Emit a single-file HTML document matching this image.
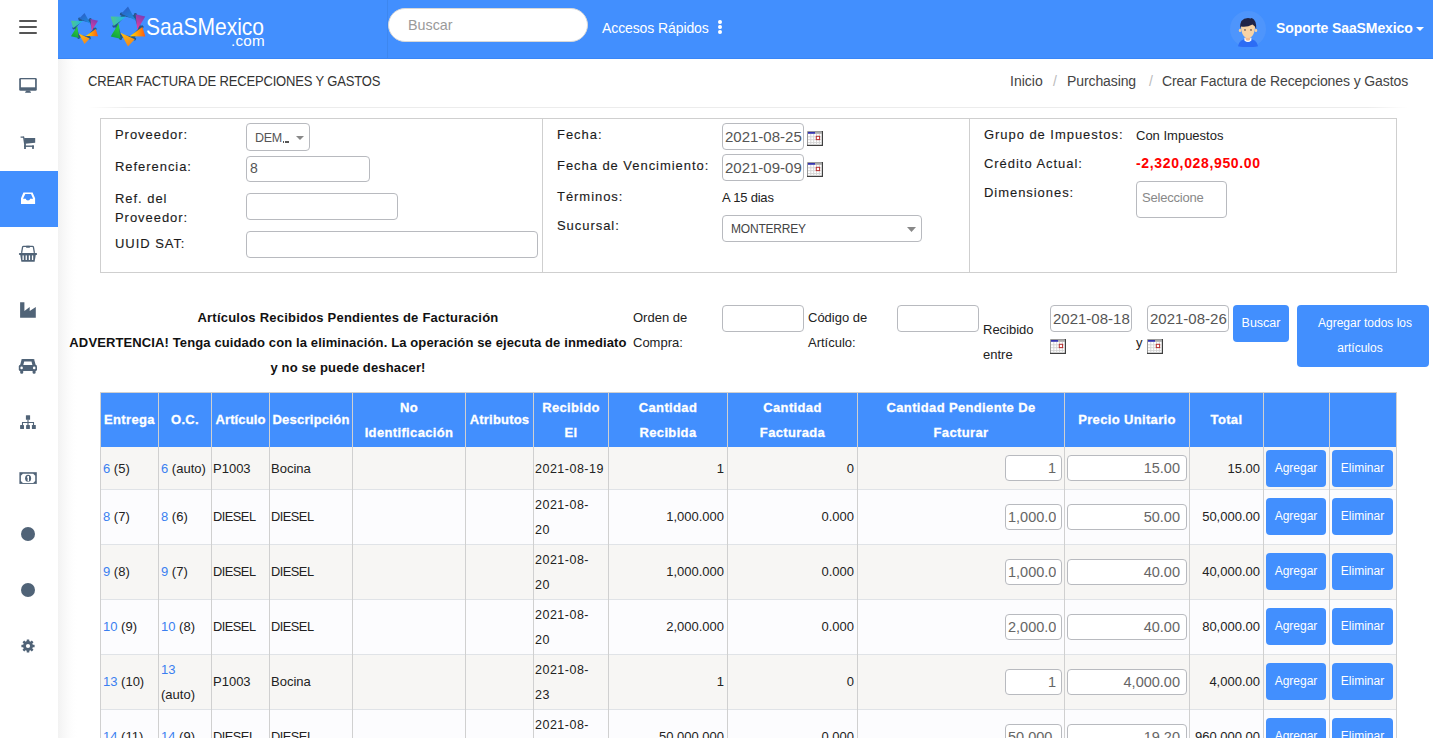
<!DOCTYPE html><html><head><meta charset="utf-8"><style>
*{box-sizing:border-box;margin:0;padding:0}
html,body{width:1433px;height:738px;overflow:hidden;background:#fff;font-family:"Liberation Sans",sans-serif;color:#222}
.a{position:absolute;white-space:nowrap}
svg{position:absolute;display:block}
#hdr{position:absolute;left:58px;top:0;width:1375px;height:59px;background:#428ffe;border-bottom:1px solid #3a86f6}
#content{position:absolute;left:58px;top:59px;width:1375px;height:679px;background:linear-gradient(90deg,#f2f2f2 0px,#f7f7f7 5px,#fbfbfb 10px,#fefefe 15px,#fff 19px)}
.lbl{position:absolute;white-space:nowrap;font-size:13px;letter-spacing:0.95px;color:#1b1b1b;-webkit-text-stroke:0.12px #1b1b1b;line-height:15px}
.inp{position:absolute;border:1px solid #b8babf;border-radius:4px;background:#fff;white-space:nowrap;overflow:hidden;color:#555}
.btn{position:absolute;background:#428ffe;border-radius:4px;color:#fff;font-size:12px;text-align:center;white-space:nowrap}
.txt{position:absolute;white-space:nowrap;font-size:13px;color:#222;line-height:15px}
</style></head><body>
<div id="content"></div>
<div id="hdr"></div>
<div class="a" style="left:19px;top:20px;width:18px;height:2px;background:#555;border-radius:1px"></div>
<div class="a" style="left:19px;top:26px;width:18px;height:2px;background:#555;border-radius:1px"></div>
<div class="a" style="left:19px;top:32px;width:18px;height:2px;background:#555;border-radius:1px"></div>
<div class="a" style="left:0;top:171px;width:58px;height:56px;background:#428ffe"></div>
<svg style="left:16px;top:73px" width="24" height="24" viewBox="0 0 24 24"><rect x="3.2" y="5" width="17.6" height="12.7" rx="1.3" fill="#506377"/><rect x="4.9" y="6.3" width="14.2" height="8" fill="#fff"/><rect x="10.1" y="17.5" width="3.8" height="1.6" fill="#506377"/><rect x="9.1" y="18.5" width="5.9" height="1.3" rx=".5" fill="#506377"/></svg>
<svg style="left:16px;top:130px" width="24" height="24" viewBox="0 0 24 24"><rect x="4.5" y="6.4" width="3.3" height="1.3" rx=".4" fill="#506377"/><path d="M6.9 6.4H8.1L9.9 13.6V18.9H8.1V14.2z" fill="#506377"/><path d="M8.1 7.9H19.2V12.8L9.3 13.7z" fill="#506377"/><rect x="8.1" y="15.5" width="9.8" height="1.4" fill="#506377"/><rect x="16.1" y="15.5" width="1.8" height="3.4" fill="#506377"/></svg>
<svg style="left:16px;top:186px" width="24" height="24" viewBox="0 0 24 24"><path d="M7.4 6.4H16.6L19.1 12.2V17.9H5V12.2zM9.3 8.1 7 12.8H9.8Q9.9 14.6 12 14.6Q14.1 14.6 14.1 12.8H17.1L15 8.1z" fill="#fff" fill-rule="evenodd"/></svg>
<svg style="left:16px;top:242px" width="24" height="24" viewBox="0 0 24 24"><path d="M5.6 10.9 6.6 5Q6.8 4.4 7.6 4.4H16.4Q17.2 4.4 17.4 5L18.4 10.9" stroke="#506377" stroke-width="1.3" fill="none"/><rect x="10" y="3.7" width="4" height="2" rx=".6" fill="#506377"/><rect x="2.9" y="11.1" width="18.2" height="1.9" rx=".9" fill="#506377"/><path d="M4.2 12.8H19.8L18.6 19.8H5.4z" fill="#506377"/><rect x="6.5" y="13.4" width="1.3" height="4.6" fill="#fff"/><rect x="9.6" y="13.4" width="1.3" height="4.6" fill="#fff"/><rect x="12.8" y="13.4" width="1.3" height="4.6" fill="#fff"/><rect x="15.9" y="13.4" width="1.3" height="4.6" fill="#fff"/></svg>
<svg style="left:16px;top:298px" width="24" height="24" viewBox="0 0 24 24"><path d="M4.1 4.2H8.4V12.9L13.7 9.1V12.9L19.8 9.1V19.8H4.1z" fill="#506377"/></svg>
<svg style="left:16px;top:352px" width="24" height="24" viewBox="0 0 24 24"><rect x="2.8" y="12.8" width="18.2" height="6.2" rx="1.6" fill="#506377"/><path d="M6.4 7H17.4Q18 7 18.2 7.6L19.7 13.3H4.1L5.6 7.6Q5.8 7 6.4 7z" fill="#506377"/><path d="M8.2 9.4H15.5L16.4 12.9H7.3z" fill="#fff"/><rect x="4.2" y="17" width="3" height="4.8" rx="1.3" fill="#506377"/><rect x="16.6" y="17" width="3" height="4.8" rx="1.3" fill="#506377"/><circle cx="5.6" cy="15.9" r="1.3" fill="#fff"/><circle cx="18.2" cy="15.9" r="1.3" fill="#fff"/></svg>
<svg style="left:16px;top:410px" width="24" height="24" viewBox="0 0 24 24"><rect x="9.9" y="5.2" width="4.2" height="4.6" rx=".5" fill="#506377"/><rect x="4.1" y="15" width="3.9" height="3.9" rx=".5" fill="#506377"/><rect x="10.1" y="15" width="3.8" height="3.9" rx=".5" fill="#506377"/><rect x="15.9" y="15" width="3.9" height="3.9" rx=".5" fill="#506377"/><path d="M12 9.5V15.2M6.5 15.2V12.45H17.5V15.2" stroke="#506377" stroke-width="1.1" fill="none"/></svg>
<svg style="left:16px;top:466px" width="24" height="24" viewBox="0 0 24 24"><rect x="3.4" y="6.2" width="17.4" height="11.7" fill="#506377"/><polygon points="6.9,7.8 17.2,7.8 19.2,9.8 19.2,14.9 17.2,16.9 6.9,16.9 4.9,14.9 4.9,9.8" fill="#fff"/><ellipse cx="12.1" cy="12.35" rx="3" ry="3.5" fill="#506377"/><path d="M11 10.6 12.2 9.9H13V15.2H11.6V11.6L11 11.9z" fill="#fff"/></svg>
<svg style="left:21px;top:527px" width="14" height="14" viewBox="0 0 14 14"><circle cx="7" cy="7" r="7" fill="#506377"/></svg>
<svg style="left:21px;top:583px" width="14" height="14" viewBox="0 0 14 14"><circle cx="7" cy="7" r="7" fill="#506377"/></svg>
<svg style="left:16px;top:634px" width="24" height="24" viewBox="0 0 24 24"><circle cx="12" cy="12" r="4.9" fill="#506377"/><rect x="10.7" y="5.4" width="2.6" height="4" rx=".4" fill="#506377" transform="rotate(0 12 12)"/><rect x="10.7" y="5.4" width="2.6" height="4" rx=".4" fill="#506377" transform="rotate(45 12 12)"/><rect x="10.7" y="5.4" width="2.6" height="4" rx=".4" fill="#506377" transform="rotate(90 12 12)"/><rect x="10.7" y="5.4" width="2.6" height="4" rx=".4" fill="#506377" transform="rotate(135 12 12)"/><rect x="10.7" y="5.4" width="2.6" height="4" rx=".4" fill="#506377" transform="rotate(180 12 12)"/><rect x="10.7" y="5.4" width="2.6" height="4" rx=".4" fill="#506377" transform="rotate(225 12 12)"/><rect x="10.7" y="5.4" width="2.6" height="4" rx=".4" fill="#506377" transform="rotate(270 12 12)"/><rect x="10.7" y="5.4" width="2.6" height="4" rx=".4" fill="#506377" transform="rotate(315 12 12)"/><circle cx="12" cy="12" r="2.1" fill="#fff"/></svg>
<svg style="left:60px;top:6px" width="48" height="46" viewBox="0 0 48 46"><polygon points="19.37,12.86 30.52,15.33 30.29,13.24 33.72,24.13 35.41,22.88 27.70,31.30 29.63,32.14 18.48,29.67 18.71,31.76 15.28,20.87 13.59,22.12 21.30,13.70" fill="none" stroke="#1d4f7a" stroke-width="2.50" stroke-linejoin="round" opacity="0.85"/><linearGradient id="ga0" x1="30.4" y1="17.6" x2="24.5" y2="6.9" gradientUnits="userSpaceOnUse"><stop offset="0" stop-color="#1a8ee0"/><stop offset="1" stop-color="#2a62c8"/></linearGradient><polygon points="19.23,12.58 24.50,6.90 30.36,17.59" fill="url(#ga0)"/><linearGradient id="ga60" x1="31.7" y1="25.1" x2="38.0" y2="14.7" gradientUnits="userSpaceOnUse"><stop offset="0" stop-color="#f03c9c"/><stop offset="1" stop-color="#7a3cb4"/></linearGradient><polygon points="30.45,12.97 38.01,14.70 31.68,25.11" fill="url(#ga60)"/><linearGradient id="ga120" x1="25.8" y1="30.0" x2="38.0" y2="30.3" gradientUnits="userSpaceOnUse"><stop offset="0" stop-color="#ffe000"/><stop offset="1" stop-color="#ff5a10"/></linearGradient><polygon points="35.73,22.89 38.01,30.30 25.83,30.03" fill="url(#ga120)"/><linearGradient id="ga180" x1="18.6" y1="27.4" x2="24.5" y2="38.1" gradientUnits="userSpaceOnUse"><stop offset="0" stop-color="#ffc010"/><stop offset="1" stop-color="#f08a20"/></linearGradient><polygon points="29.77,32.42 24.50,38.10 18.64,27.41" fill="url(#ga180)"/><linearGradient id="ga240" x1="17.3" y1="19.9" x2="11.0" y2="30.3" gradientUnits="userSpaceOnUse"><stop offset="0" stop-color="#34d838"/><stop offset="1" stop-color="#10a040"/></linearGradient><polygon points="18.55,32.03 10.99,30.30 17.32,19.89" fill="url(#ga240)"/><linearGradient id="ga300" x1="23.2" y1="15.0" x2="11.0" y2="14.7" gradientUnits="userSpaceOnUse"><stop offset="0" stop-color="#1ab4f4"/><stop offset="1" stop-color="#50c888"/></linearGradient><polygon points="13.27,22.11 10.99,14.70 23.17,14.97" fill="url(#ga300)"/></svg>
<svg style="left:100px;top:0px" width="56" height="54" viewBox="0 0 56 54"><polygon points="21.43,14.14 35.71,17.31 35.42,14.63 39.82,28.58 41.99,26.99 32.10,37.78 34.57,38.86 20.29,35.69 20.58,38.37 16.18,24.42 14.01,26.01 23.90,15.22" fill="none" stroke="#1d4f7a" stroke-width="3.20" stroke-linejoin="round" opacity="0.85"/><linearGradient id="gb0" x1="35.5" y1="20.2" x2="28.0" y2="6.5" gradientUnits="userSpaceOnUse"><stop offset="0" stop-color="#1a8ee0"/><stop offset="1" stop-color="#2a62c8"/></linearGradient><polygon points="21.24,13.79 28.00,6.50 35.51,20.20" fill="url(#gb0)"/><linearGradient id="gb60" x1="37.2" y1="29.9" x2="45.3" y2="16.5" gradientUnits="userSpaceOnUse"><stop offset="0" stop-color="#f03c9c"/><stop offset="1" stop-color="#7a3cb4"/></linearGradient><polygon points="35.63,14.29 45.32,16.50 37.21,29.85" fill="url(#gb60)"/><linearGradient id="gb120" x1="29.7" y1="36.2" x2="45.3" y2="36.5" gradientUnits="userSpaceOnUse"><stop offset="0" stop-color="#ffe000"/><stop offset="1" stop-color="#ff5a10"/></linearGradient><polygon points="42.39,27.00 45.32,36.50 29.70,36.15" fill="url(#gb120)"/><linearGradient id="gb180" x1="20.5" y1="32.8" x2="28.0" y2="46.5" gradientUnits="userSpaceOnUse"><stop offset="0" stop-color="#ffc010"/><stop offset="1" stop-color="#f08a20"/></linearGradient><polygon points="34.76,39.21 28.00,46.50 20.49,32.80" fill="url(#gb180)"/><linearGradient id="gb240" x1="18.8" y1="23.1" x2="10.7" y2="36.5" gradientUnits="userSpaceOnUse"><stop offset="0" stop-color="#34d838"/><stop offset="1" stop-color="#10a040"/></linearGradient><polygon points="20.37,38.71 10.68,36.50 18.79,23.15" fill="url(#gb240)"/><linearGradient id="gb300" x1="26.3" y1="16.8" x2="10.7" y2="16.5" gradientUnits="userSpaceOnUse"><stop offset="0" stop-color="#1ab4f4"/><stop offset="1" stop-color="#50c888"/></linearGradient><polygon points="13.61,26.00 10.68,16.50 26.30,16.85" fill="url(#gb300)"/></svg>
<div class="a" style="left:146px;top:13px;font-size:24px;line-height:28px;color:#fff;transform:scaleX(0.876);transform-origin:0 0">SaaSMexico</div>
<div class="a" style="left:231px;top:32.5px;font-size:14.5px;line-height:16px;color:#fff;letter-spacing:0.2px;transform:scaleX(1.05);transform-origin:0 0">.com</div>
<div class="a" style="left:387px;top:0;width:1px;height:58px;background:#3d87ef"></div>
<div class="a" style="left:388px;top:8px;width:200px;height:34px;border-radius:17px;background:#fff;border:1px solid #d8d8d8"></div>
<div class="a" style="left:408px;top:17px;font-size:14.3px;line-height:16px;color:#9a9a9a">Buscar</div>
<div class="a" style="left:602px;top:20px;font-size:14px;line-height:16px;color:#fff;letter-spacing:-0.1px">Accesos Rápidos</div>
<div class="a" style="left:718.1px;top:19.9px;width:3.8px;height:3.8px;border-radius:50%;background:#fff"></div>
<div class="a" style="left:718.1px;top:25px;width:3.8px;height:3.8px;border-radius:50%;background:#fff"></div>
<div class="a" style="left:718.1px;top:30.1px;width:3.8px;height:3.8px;border-radius:50%;background:#fff"></div>
<svg style="left:1230px;top:11px" width="36" height="36" viewBox="0 0 36 36"><circle cx="18" cy="18" r="18" fill="#4e95fc"/><path d="M8 35.3Q9 28.2 18 27.8Q27 28.2 28 35.3Q18 37.2 8 35.3z" fill="#2c6cf5"/><path d="M14.4 26.8H21.4V29.6Q18 32.6 14.4 29.6z" fill="#fff"/><rect x="15.4" y="25" width="5" height="4.8" rx="2.2" fill="#f2bb90"/><ellipse cx="10" cy="19.4" rx="1.2" ry="1.7" fill="#f5cfa0"/><ellipse cx="26" cy="19.4" rx="1.2" ry="1.7" fill="#f5cfa0"/><path d="M10.9 12Q10.7 26.9 18 26.9Q25.3 26.9 25.2 12z" fill="#f7d3a5"/><path d="M10 18Q9.4 7 18 7Q19.6 7 20.6 7.5L21.8 7Q26.7 9.2 26.2 18Q25 14.6 22.4 13.4Q17.2 16.6 11.2 15.6Q10.4 16.6 10 18z" fill="#1f2448"/><circle cx="15" cy="18.9" r=".85" fill="#6a5a58"/><circle cx="21" cy="18.9" r=".85" fill="#6a5a58"/></svg>
<div class="a" style="left:1276px;top:20px;font-size:14px;line-height:16px;color:#fff;font-weight:bold;letter-spacing:-0.1px">Soporte SaaSMexico</div>
<svg style="left:1416px;top:27px" width="8" height="4" viewBox="0 0 8 4"><path d="M0 0h8L4 4z" fill="#fff"/></svg>
<div class="a" style="left:88px;top:73px;font-size:14.6px;line-height:16px;color:#333;letter-spacing:-0.2px;transform:scaleX(0.892);transform-origin:0 0">CREAR FACTURA DE RECEPCIONES Y GASTOS</div>
<div class="a" style="left:1010px;top:73px;font-size:14px;line-height:16px;color:#444">Inicio</div>
<div class="a" style="left:1053px;top:73px;font-size:14px;line-height:16px;color:#bbb">/</div>
<div class="a" style="left:1067px;top:73px;font-size:14px;line-height:16px;color:#444;letter-spacing:-0.1px">Purchasing</div>
<div class="a" style="left:1149px;top:73px;font-size:14px;line-height:16px;color:#bbb">/</div>
<div class="a" style="left:1162px;top:73px;font-size:14px;line-height:16px;color:#444;letter-spacing:-0.1px">Crear Factura de Recepciones y Gastos</div>
<div class="a" style="left:88px;top:107px;width:1320px;height:1px;background:linear-gradient(90deg,rgba(230,230,230,0),#ececec 40px,#ececec 1280px,rgba(230,230,230,0))"></div>
<div class="a" style="left:100px;top:118px;width:1297px;height:155px;border:1px solid #cfcfcf;background:#fff"></div>
<div class="a" style="left:542px;top:118px;width:1px;height:155px;background:#cfcfcf"></div>
<div class="a" style="left:969px;top:118px;width:1px;height:155px;background:#cfcfcf"></div>
<div class="lbl" style="left:115px;top:127px">Proveedor:</div>
<div class="inp" style="left:246px;top:123px;width:64px;height:28px;"><span style="position:absolute;left:8px;top:7px;font-size:12.5px;color:#555;letter-spacing:-0.3px">DEM</span><span style="position:absolute;left:36px;top:17px;width:6px;height:1.6px;background:repeating-linear-gradient(90deg,#555 0,#555 1.4px,transparent 1.4px,transparent 2.2px)"></span><svg style="left:49px;top:12px" width="8" height="4"><path d="M0 0h8L4 4z" fill="#888"/></svg></div>
<div class="lbl" style="left:115px;top:159px">Referencia:</div>
<div class="inp" style="left:246px;top:156px;width:124px;height:26px;"><span style="position:absolute;left:3px;top:3px;font-size:14px;color:#555">8</span></div>
<div class="lbl" style="left:115px;top:191px">Ref. del</div>
<div class="lbl" style="left:115px;top:210px">Proveedor:</div>
<div class="inp" style="left:246px;top:193px;width:152px;height:27px;"></div>
<div class="lbl" style="left:115px;top:236px">UUID SAT:</div>
<div class="inp" style="left:246px;top:231px;width:292px;height:27px;"></div>
<div class="lbl" style="left:557px;top:127px">Fecha:</div>
<div class="inp" style="left:722px;top:123px;width:82px;height:27px;"><span style="position:absolute;left:2px;top:4px;font-size:15px;color:#555">2021-08-25</span></div>
<svg style="left:807px;top:131px" width="16" height="15" viewBox="0 0 16 15"><rect x="0" y="0" width="16" height="15" fill="#fff"/><path d="M.5 15V.5H15" stroke="#9a9a9a" stroke-width="1" fill="none"/><path d="M15.4 0v14.4H0" stroke="#404040" stroke-width="1.2" fill="none"/><rect x="1" y="1" width="7" height="1.8" fill="#3434b0"/><rect x="8" y="1" width="7" height="1.8" fill="#a8a8a8"/><path d="M3.8 3v11M6.7 3v11M9.5 3v11M12.4 3v11M1 5.8h14M1 8.7h14M1 11.6h14" stroke="#d2d2d2" stroke-width=".9"/><rect x="9.3" y="5.3" width="3.3" height="3.3" fill="#fff" stroke="#b83030" stroke-width="1"/></svg>
<div class="lbl" style="left:557px;top:158px">Fecha de Vencimiento:</div>
<div class="inp" style="left:722px;top:154px;width:82px;height:27px;"><span style="position:absolute;left:2px;top:4px;font-size:15px;color:#555">2021-09-09</span></div>
<svg style="left:807px;top:162px" width="16" height="15" viewBox="0 0 16 15"><rect x="0" y="0" width="16" height="15" fill="#fff"/><path d="M.5 15V.5H15" stroke="#9a9a9a" stroke-width="1" fill="none"/><path d="M15.4 0v14.4H0" stroke="#404040" stroke-width="1.2" fill="none"/><rect x="1" y="1" width="7" height="1.8" fill="#3434b0"/><rect x="8" y="1" width="7" height="1.8" fill="#a8a8a8"/><path d="M3.8 3v11M6.7 3v11M9.5 3v11M12.4 3v11M1 5.8h14M1 8.7h14M1 11.6h14" stroke="#d2d2d2" stroke-width=".9"/><rect x="9.3" y="5.3" width="3.3" height="3.3" fill="#fff" stroke="#b83030" stroke-width="1"/></svg>
<div class="lbl" style="left:557px;top:189px">Términos:</div>
<div class="txt" style="left:722px;top:190px;letter-spacing:-0.2px">A 15 dias</div>
<div class="lbl" style="left:557px;top:218px">Sucursal:</div>
<div class="inp" style="left:722px;top:215px;width:200px;height:27px;"><span style="position:absolute;left:8px;top:6px;font-size:12px;color:#444;letter-spacing:-0.2px">MONTERREY</span><svg style="left:184px;top:11px" width="9" height="5"><path d="M0 0h9L4.5 5z" fill="#888"/></svg></div>
<div class="lbl" style="left:984px;top:127px">Grupo de Impuestos:</div>
<div class="txt" style="left:1136px;top:128px;">Con Impuestos</div>
<div class="lbl" style="left:984px;top:156px">Crédito Actual:</div>
<div class="a" style="left:1136px;top:156px;font-size:14px;line-height:15px;font-weight:bold;color:#f00;letter-spacing:0.65px">-2,320,028,950.00</div>
<div class="lbl" style="left:984px;top:185px">Dimensiones:</div>
<div class="inp" style="left:1136px;top:181px;width:91px;height:37px;"><span style="position:absolute;left:5px;top:8px;font-size:13px;color:#888;letter-spacing:-0.2px">Seleccione</span></div>
<div class="a" style="left:-52px;width:800px;text-align:center;top:310px;font-size:13px;line-height:15px;font-weight:bold;color:#111;letter-spacing:0.22px">Artículos Recibidos Pendientes de Facturación</div>
<div class="a" style="left:-52px;width:800px;text-align:center;top:335px;font-size:13px;line-height:15px;font-weight:bold;color:#111;letter-spacing:0.12px">ADVERTENCIA! Tenga cuidado con la eliminación. La operación se ejecuta de inmediato</div>
<div class="a" style="left:-52px;width:800px;text-align:center;top:360px;font-size:13px;line-height:15px;font-weight:bold;color:#111;letter-spacing:0.15px">y no se puede deshacer!</div>
<div class="txt" style="left:633px;top:310px;">Orden de</div>
<div class="txt" style="left:633px;top:335px;">Compra:</div>
<div class="inp" style="left:722px;top:305px;width:82px;height:27px;"></div>
<div class="txt" style="left:808px;top:310px;">Código de</div>
<div class="txt" style="left:808px;top:335px;">Artículo:</div>
<div class="inp" style="left:897px;top:305px;width:82px;height:27px;"></div>
<div class="txt" style="left:983px;top:322px;">Recibido</div>
<div class="txt" style="left:983px;top:347px;">entre</div>
<div class="inp" style="left:1050px;top:305px;width:82px;height:27px;"><span style="position:absolute;left:2px;top:4px;font-size:15px;color:#555">2021-08-18</span></div>
<svg style="left:1050px;top:339px" width="16" height="15" viewBox="0 0 16 15"><rect x="0" y="0" width="16" height="15" fill="#fff"/><path d="M.5 15V.5H15" stroke="#9a9a9a" stroke-width="1" fill="none"/><path d="M15.4 0v14.4H0" stroke="#404040" stroke-width="1.2" fill="none"/><rect x="1" y="1" width="7" height="1.8" fill="#3434b0"/><rect x="8" y="1" width="7" height="1.8" fill="#a8a8a8"/><path d="M3.8 3v11M6.7 3v11M9.5 3v11M12.4 3v11M1 5.8h14M1 8.7h14M1 11.6h14" stroke="#d2d2d2" stroke-width=".9"/><rect x="9.3" y="5.3" width="3.3" height="3.3" fill="#fff" stroke="#b83030" stroke-width="1"/></svg>
<div class="txt" style="left:1136px;top:335px;">y</div>
<div class="inp" style="left:1147px;top:305px;width:82px;height:27px;"><span style="position:absolute;left:2px;top:4px;font-size:15px;color:#555">2021-08-26</span></div>
<svg style="left:1147px;top:339px" width="16" height="15" viewBox="0 0 16 15"><rect x="0" y="0" width="16" height="15" fill="#fff"/><path d="M.5 15V.5H15" stroke="#9a9a9a" stroke-width="1" fill="none"/><path d="M15.4 0v14.4H0" stroke="#404040" stroke-width="1.2" fill="none"/><rect x="1" y="1" width="7" height="1.8" fill="#3434b0"/><rect x="8" y="1" width="7" height="1.8" fill="#a8a8a8"/><path d="M3.8 3v11M6.7 3v11M9.5 3v11M12.4 3v11M1 5.8h14M1 8.7h14M1 11.6h14" stroke="#d2d2d2" stroke-width=".9"/><rect x="9.3" y="5.3" width="3.3" height="3.3" fill="#fff" stroke="#b83030" stroke-width="1"/></svg>
<div class="btn" style="left:1233px;top:305px;width:56px;height:37px;line-height:36px;font-size:12.5px">Buscar</div>
<div class="btn" style="left:1297px;top:305px;width:132px;height:62px"></div>
<div class="a" style="left:1265px;width:200px;text-align:center;top:316px;font-size:12px;line-height:15px;color:#fff">Agregar todos los</div>
<div class="a" style="left:1260px;width:200px;text-align:center;top:341px;font-size:12px;line-height:15px;color:#fff">artículos</div>
<div class="a" style="left:100px;top:392px;width:1297px;height:55px;background:#428ffe"></div>
<div class="a" style="left:100px;top:447px;width:1297px;height:42px;background:#f7f6f4"></div>
<div class="a" style="left:100px;top:489px;width:1297px;height:55px;background:#fcfcfe"></div>
<div class="a" style="left:100px;top:544px;width:1297px;height:55px;background:#f7f6f4"></div>
<div class="a" style="left:100px;top:599px;width:1297px;height:55px;background:#fcfcfe"></div>
<div class="a" style="left:100px;top:654px;width:1297px;height:55px;background:#f7f6f4"></div>
<div class="a" style="left:100px;top:709px;width:1297px;height:55px;background:#fcfcfe"></div>
<div class="a" style="left:100px;top:489px;width:1297px;height:1px;background:#e0e3e7"></div>
<div class="a" style="left:100px;top:544px;width:1297px;height:1px;background:#e0e3e7"></div>
<div class="a" style="left:100px;top:599px;width:1297px;height:1px;background:#e0e3e7"></div>
<div class="a" style="left:100px;top:654px;width:1297px;height:1px;background:#e0e3e7"></div>
<div class="a" style="left:100px;top:709px;width:1297px;height:1px;background:#e0e3e7"></div>
<div class="a" style="left:100px;top:764px;width:1297px;height:1px;background:#e0e3e7"></div>
<div class="a" style="left:100px;top:392px;width:1297px;height:1px;background:#d0d0d0"></div>
<div class="a" style="left:100px;top:392px;width:1px;height:346px;background:#d0d0d0"></div>
<div class="a" style="left:158px;top:392px;width:1px;height:346px;background:#d0d0d0"></div>
<div class="a" style="left:211px;top:392px;width:1px;height:346px;background:#d0d0d0"></div>
<div class="a" style="left:269px;top:392px;width:1px;height:346px;background:#d0d0d0"></div>
<div class="a" style="left:352px;top:392px;width:1px;height:346px;background:#d0d0d0"></div>
<div class="a" style="left:465px;top:392px;width:1px;height:346px;background:#d0d0d0"></div>
<div class="a" style="left:533px;top:392px;width:1px;height:346px;background:#d0d0d0"></div>
<div class="a" style="left:608px;top:392px;width:1px;height:346px;background:#d0d0d0"></div>
<div class="a" style="left:727px;top:392px;width:1px;height:346px;background:#d0d0d0"></div>
<div class="a" style="left:857px;top:392px;width:1px;height:346px;background:#d0d0d0"></div>
<div class="a" style="left:1064px;top:392px;width:1px;height:346px;background:#d0d0d0"></div>
<div class="a" style="left:1189px;top:392px;width:1px;height:346px;background:#d0d0d0"></div>
<div class="a" style="left:1263px;top:392px;width:1px;height:346px;background:#d0d0d0"></div>
<div class="a" style="left:1329px;top:392px;width:1px;height:346px;background:#d0d0d0"></div>
<div class="a" style="left:1396px;top:392px;width:1px;height:346px;background:#d0d0d0"></div>
<div class="a" style="left:100px;width:59px;text-align:center;top:412.0px;font-size:13px;line-height:15px;font-weight:bold;color:#fff;letter-spacing:0.35px;-webkit-text-stroke:0.3px #fff">Entrega</div>
<div class="a" style="left:158px;width:54px;text-align:center;top:412.0px;font-size:13px;line-height:15px;font-weight:bold;color:#fff;letter-spacing:0.35px;-webkit-text-stroke:0.3px #fff">O.C.</div>
<div class="a" style="left:211px;width:59px;text-align:center;top:412.0px;font-size:13px;line-height:15px;font-weight:bold;color:#fff;letter-spacing:0.1px;-webkit-text-stroke:0.3px #fff">Artículo</div>
<div class="a" style="left:269px;width:84px;text-align:center;top:412.0px;font-size:13px;line-height:15px;font-weight:bold;color:#fff;letter-spacing:0.25px;-webkit-text-stroke:0.3px #fff">Descripción</div>
<div class="a" style="left:352px;width:114px;text-align:center;top:399.5px;font-size:13px;line-height:15px;font-weight:bold;color:#fff;letter-spacing:0.35px;-webkit-text-stroke:0.3px #fff">No</div>
<div class="a" style="left:352px;width:114px;text-align:center;top:424.5px;font-size:13px;line-height:15px;font-weight:bold;color:#fff;letter-spacing:0.35px;-webkit-text-stroke:0.3px #fff">Identificación</div>
<div class="a" style="left:465px;width:69px;text-align:center;top:412.0px;font-size:13px;line-height:15px;font-weight:bold;color:#fff;letter-spacing:0.2px;-webkit-text-stroke:0.3px #fff">Atributos</div>
<div class="a" style="left:533px;width:76px;text-align:center;top:399.5px;font-size:13px;line-height:15px;font-weight:bold;color:#fff;letter-spacing:0.35px;-webkit-text-stroke:0.3px #fff">Recibido</div>
<div class="a" style="left:533px;width:76px;text-align:center;top:424.5px;font-size:13px;line-height:15px;font-weight:bold;color:#fff;letter-spacing:0.35px;-webkit-text-stroke:0.3px #fff">El</div>
<div class="a" style="left:608px;width:120px;text-align:center;top:399.5px;font-size:13px;line-height:15px;font-weight:bold;color:#fff;letter-spacing:0.35px;-webkit-text-stroke:0.3px #fff">Cantidad</div>
<div class="a" style="left:608px;width:120px;text-align:center;top:424.5px;font-size:13px;line-height:15px;font-weight:bold;color:#fff;letter-spacing:0.35px;-webkit-text-stroke:0.3px #fff">Recibida</div>
<div class="a" style="left:727px;width:131px;text-align:center;top:399.5px;font-size:13px;line-height:15px;font-weight:bold;color:#fff;letter-spacing:0.35px;-webkit-text-stroke:0.3px #fff">Cantidad</div>
<div class="a" style="left:727px;width:131px;text-align:center;top:424.5px;font-size:13px;line-height:15px;font-weight:bold;color:#fff;letter-spacing:0.35px;-webkit-text-stroke:0.3px #fff">Facturada</div>
<div class="a" style="left:857px;width:208px;text-align:center;top:399.5px;font-size:13px;line-height:15px;font-weight:bold;color:#fff;letter-spacing:0.35px;-webkit-text-stroke:0.3px #fff">Cantidad Pendiente De</div>
<div class="a" style="left:857px;width:208px;text-align:center;top:424.5px;font-size:13px;line-height:15px;font-weight:bold;color:#fff;letter-spacing:0.35px;-webkit-text-stroke:0.3px #fff">Facturar</div>
<div class="a" style="left:1064px;width:126px;text-align:center;top:412.0px;font-size:13px;line-height:15px;font-weight:bold;color:#fff;letter-spacing:0.35px;-webkit-text-stroke:0.3px #fff">Precio Unitario</div>
<div class="a" style="left:1189px;width:75px;text-align:center;top:412.0px;font-size:13px;line-height:15px;font-weight:bold;color:#fff;letter-spacing:0.35px;-webkit-text-stroke:0.3px #fff">Total</div>
<div class="a" style="left:103px;top:460.5px;font-size:13px;line-height:15px;color:#222;"><span style="color:#3a7ff0">6</span> (5)</div>
<div class="a" style="left:161px;top:460.5px;font-size:13px;line-height:15px;color:#222;"><span style="color:#3a7ff0">6</span> (auto)</div>
<div class="a" style="left:213px;top:460.5px;font-size:13px;line-height:15px;color:#222;">P1003</div>
<div class="a" style="left:271px;top:460.5px;font-size:13px;line-height:15px;color:#222;">Bocina</div>
<div class="a" style="left:535px;top:461.5px;font-size:13px;line-height:15px;color:#222;font-size:12.5px;letter-spacing:0.5px">2021-08-19</div>
<div class="a" style="left:424px;width:300px;text-align:right;top:460.5px;font-size:13px;line-height:15px;color:#222;">1</div>
<div class="a" style="left:554px;width:300px;text-align:right;top:460.5px;font-size:13px;line-height:15px;color:#222;">0</div>
<div class="inp" style="left:1005px;top:455px;width:57px;height:26px;"><span style="position:absolute;right:5px;top:4px;font-size:14.5px;color:#666">1</span></div>
<div class="inp" style="left:1067px;top:455px;width:120px;height:26px;"><span style="position:absolute;right:6px;top:4px;font-size:14.5px;color:#666">15.00</span></div>
<div class="a" style="left:960px;width:300px;text-align:right;top:460.5px;font-size:13px;line-height:15px;color:#222;">15.00</div>
<div class="btn" style="left:1266px;top:450px;width:60px;height:37px;line-height:37px">Agregar</div>
<div class="btn" style="left:1332px;top:450px;width:61px;height:37px;line-height:37px">Eliminar</div>
<div class="a" style="left:103px;top:509.0px;font-size:13px;line-height:15px;color:#222;"><span style="color:#3a7ff0">8</span> (7)</div>
<div class="a" style="left:161px;top:509.0px;font-size:13px;line-height:15px;color:#222;"><span style="color:#3a7ff0">8</span> (6)</div>
<div class="a" style="left:213px;top:509.0px;font-size:13px;line-height:15px;color:#222;letter-spacing:-0.5px;font-size:12.8px">DIESEL</div>
<div class="a" style="left:271px;top:509.0px;font-size:13px;line-height:15px;color:#222;letter-spacing:-0.5px;font-size:12.8px">DIESEL</div>
<div class="a" style="left:535px;top:497.5px;font-size:13px;line-height:15px;color:#222;font-size:12.5px;letter-spacing:0.5px">2021-08-</div>
<div class="a" style="left:535px;top:522.5px;font-size:13px;line-height:15px;color:#222;font-size:12.5px;letter-spacing:0.5px">20</div>
<div class="a" style="left:424px;width:300px;text-align:right;top:509.0px;font-size:13px;line-height:15px;color:#222;">1,000.000</div>
<div class="a" style="left:554px;width:300px;text-align:right;top:509.0px;font-size:13px;line-height:15px;color:#222;">0.000</div>
<div class="inp" style="left:1005px;top:504px;width:57px;height:26px;"><div style="position:absolute;left:2px;right:5px;top:0;bottom:0;overflow:hidden"><span style="position:absolute;left:0;top:4px;font-size:14.5px;color:#666;letter-spacing:0px">1,000.00</span></div></div>
<div class="inp" style="left:1067px;top:504px;width:120px;height:26px;"><span style="position:absolute;right:6px;top:4px;font-size:14.5px;color:#666">50.00</span></div>
<div class="a" style="left:960px;width:300px;text-align:right;top:509.0px;font-size:13px;line-height:15px;color:#222;">50,000.00</div>
<div class="btn" style="left:1266px;top:498px;width:60px;height:37px;line-height:37px">Agregar</div>
<div class="btn" style="left:1332px;top:498px;width:61px;height:37px;line-height:37px">Eliminar</div>
<div class="a" style="left:103px;top:564.0px;font-size:13px;line-height:15px;color:#222;"><span style="color:#3a7ff0">9</span> (8)</div>
<div class="a" style="left:161px;top:564.0px;font-size:13px;line-height:15px;color:#222;"><span style="color:#3a7ff0">9</span> (7)</div>
<div class="a" style="left:213px;top:564.0px;font-size:13px;line-height:15px;color:#222;letter-spacing:-0.5px;font-size:12.8px">DIESEL</div>
<div class="a" style="left:271px;top:564.0px;font-size:13px;line-height:15px;color:#222;letter-spacing:-0.5px;font-size:12.8px">DIESEL</div>
<div class="a" style="left:535px;top:552.5px;font-size:13px;line-height:15px;color:#222;font-size:12.5px;letter-spacing:0.5px">2021-08-</div>
<div class="a" style="left:535px;top:577.5px;font-size:13px;line-height:15px;color:#222;font-size:12.5px;letter-spacing:0.5px">20</div>
<div class="a" style="left:424px;width:300px;text-align:right;top:564.0px;font-size:13px;line-height:15px;color:#222;">1,000.000</div>
<div class="a" style="left:554px;width:300px;text-align:right;top:564.0px;font-size:13px;line-height:15px;color:#222;">0.000</div>
<div class="inp" style="left:1005px;top:559px;width:57px;height:26px;"><div style="position:absolute;left:2px;right:5px;top:0;bottom:0;overflow:hidden"><span style="position:absolute;left:0;top:4px;font-size:14.5px;color:#666;letter-spacing:0px">1,000.00</span></div></div>
<div class="inp" style="left:1067px;top:559px;width:120px;height:26px;"><span style="position:absolute;right:6px;top:4px;font-size:14.5px;color:#666">40.00</span></div>
<div class="a" style="left:960px;width:300px;text-align:right;top:564.0px;font-size:13px;line-height:15px;color:#222;">40,000.00</div>
<div class="btn" style="left:1266px;top:553px;width:60px;height:37px;line-height:37px">Agregar</div>
<div class="btn" style="left:1332px;top:553px;width:61px;height:37px;line-height:37px">Eliminar</div>
<div class="a" style="left:103px;top:619.0px;font-size:13px;line-height:15px;color:#222;"><span style="color:#3a7ff0">10</span> (9)</div>
<div class="a" style="left:161px;top:619.0px;font-size:13px;line-height:15px;color:#222;"><span style="color:#3a7ff0">10</span> (8)</div>
<div class="a" style="left:213px;top:619.0px;font-size:13px;line-height:15px;color:#222;letter-spacing:-0.5px;font-size:12.8px">DIESEL</div>
<div class="a" style="left:271px;top:619.0px;font-size:13px;line-height:15px;color:#222;letter-spacing:-0.5px;font-size:12.8px">DIESEL</div>
<div class="a" style="left:535px;top:607.5px;font-size:13px;line-height:15px;color:#222;font-size:12.5px;letter-spacing:0.5px">2021-08-</div>
<div class="a" style="left:535px;top:632.5px;font-size:13px;line-height:15px;color:#222;font-size:12.5px;letter-spacing:0.5px">20</div>
<div class="a" style="left:424px;width:300px;text-align:right;top:619.0px;font-size:13px;line-height:15px;color:#222;">2,000.000</div>
<div class="a" style="left:554px;width:300px;text-align:right;top:619.0px;font-size:13px;line-height:15px;color:#222;">0.000</div>
<div class="inp" style="left:1005px;top:614px;width:57px;height:26px;"><div style="position:absolute;left:2px;right:5px;top:0;bottom:0;overflow:hidden"><span style="position:absolute;left:0;top:4px;font-size:14.5px;color:#666;letter-spacing:0px">2,000.00</span></div></div>
<div class="inp" style="left:1067px;top:614px;width:120px;height:26px;"><span style="position:absolute;right:6px;top:4px;font-size:14.5px;color:#666">40.00</span></div>
<div class="a" style="left:960px;width:300px;text-align:right;top:619.0px;font-size:13px;line-height:15px;color:#222;">80,000.00</div>
<div class="btn" style="left:1266px;top:608px;width:60px;height:37px;line-height:37px">Agregar</div>
<div class="btn" style="left:1332px;top:608px;width:61px;height:37px;line-height:37px">Eliminar</div>
<div class="a" style="left:103px;top:674.0px;font-size:13px;line-height:15px;color:#222;"><span style="color:#3a7ff0">13</span> (10)</div>
<div class="a" style="left:161px;top:661.5px;font-size:13px;line-height:15px;color:#222;"><span style="color:#3a7ff0">13</span></div>
<div class="a" style="left:161px;top:686.5px;font-size:13px;line-height:15px;color:#222;">(auto)</div>
<div class="a" style="left:213px;top:674.0px;font-size:13px;line-height:15px;color:#222;">P1003</div>
<div class="a" style="left:271px;top:674.0px;font-size:13px;line-height:15px;color:#222;">Bocina</div>
<div class="a" style="left:535px;top:662.5px;font-size:13px;line-height:15px;color:#222;font-size:12.5px;letter-spacing:0.5px">2021-08-</div>
<div class="a" style="left:535px;top:687.5px;font-size:13px;line-height:15px;color:#222;font-size:12.5px;letter-spacing:0.5px">23</div>
<div class="a" style="left:424px;width:300px;text-align:right;top:674.0px;font-size:13px;line-height:15px;color:#222;">1</div>
<div class="a" style="left:554px;width:300px;text-align:right;top:674.0px;font-size:13px;line-height:15px;color:#222;">0</div>
<div class="inp" style="left:1005px;top:669px;width:57px;height:26px;"><span style="position:absolute;right:5px;top:4px;font-size:14.5px;color:#666">1</span></div>
<div class="inp" style="left:1067px;top:669px;width:120px;height:26px;"><span style="position:absolute;right:6px;top:4px;font-size:14.5px;color:#666">4,000.00</span></div>
<div class="a" style="left:960px;width:300px;text-align:right;top:674.0px;font-size:13px;line-height:15px;color:#222;">4,000.00</div>
<div class="btn" style="left:1266px;top:663px;width:60px;height:37px;line-height:37px">Agregar</div>
<div class="btn" style="left:1332px;top:663px;width:61px;height:37px;line-height:37px">Eliminar</div>
<div class="a" style="left:103px;top:729.0px;font-size:13px;line-height:15px;color:#222;"><span style="color:#3a7ff0">14</span> (11)</div>
<div class="a" style="left:161px;top:729.0px;font-size:13px;line-height:15px;color:#222;"><span style="color:#3a7ff0">14</span> (9)</div>
<div class="a" style="left:213px;top:729.0px;font-size:13px;line-height:15px;color:#222;letter-spacing:-0.5px;font-size:12.8px">DIESEL</div>
<div class="a" style="left:271px;top:729.0px;font-size:13px;line-height:15px;color:#222;letter-spacing:-0.5px;font-size:12.8px">DIESEL</div>
<div class="a" style="left:535px;top:717.5px;font-size:13px;line-height:15px;color:#222;font-size:12.5px;letter-spacing:0.5px">2021-08-</div>
<div class="a" style="left:535px;top:742.5px;font-size:13px;line-height:15px;color:#222;font-size:12.5px;letter-spacing:0.5px">24</div>
<div class="a" style="left:424px;width:300px;text-align:right;top:729.0px;font-size:13px;line-height:15px;color:#222;">50,000.000</div>
<div class="a" style="left:554px;width:300px;text-align:right;top:729.0px;font-size:13px;line-height:15px;color:#222;">0.000</div>
<div class="inp" style="left:1005px;top:724px;width:57px;height:26px;"><div style="position:absolute;left:2px;right:5px;top:0;bottom:0;overflow:hidden"><span style="position:absolute;left:0;top:4px;font-size:14.5px;color:#666;letter-spacing:0px">50,000.000</span></div></div>
<div class="inp" style="left:1067px;top:724px;width:120px;height:26px;"><span style="position:absolute;right:6px;top:4px;font-size:14.5px;color:#666">19.20</span></div>
<div class="a" style="left:960px;width:300px;text-align:right;top:729.0px;font-size:13px;line-height:15px;color:#222;">960,000.00</div>
<div class="btn" style="left:1266px;top:718px;width:60px;height:37px;line-height:37px">Agregar</div>
<div class="btn" style="left:1332px;top:718px;width:61px;height:37px;line-height:37px">Eliminar</div>
</body></html>
